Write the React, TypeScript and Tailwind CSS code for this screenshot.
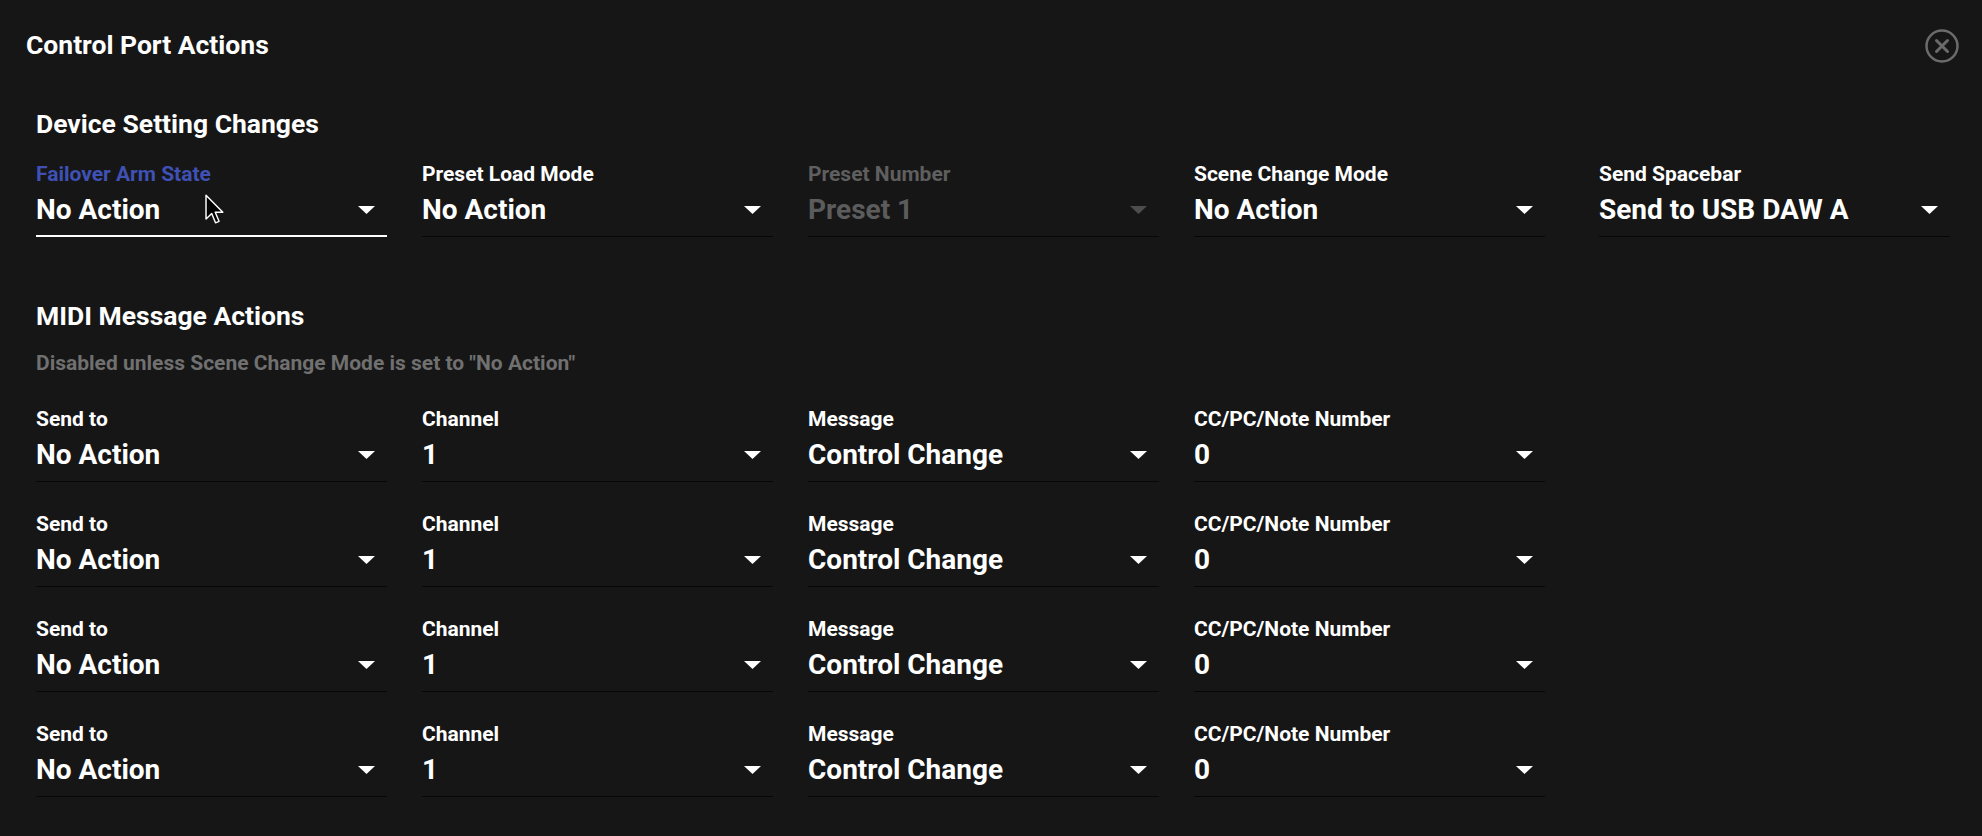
import React from "react";

interface Field {
  label: string;
  value: string;
  focused?: boolean;
  disabled?: boolean;
}

const deviceFields: Field[] = [
  { label: "Failover Arm State", value: "No Action", focused: true },
  { label: "Preset Load Mode", value: "No Action" },
  { label: "Preset Number", value: "Preset 1", disabled: true },
  { label: "Scene Change Mode", value: "No Action" },
];

const midiRow: Field[] = [
  { label: "Send to", value: "No Action" },
  { label: "Channel", value: "1" },
  { label: "Message", value: "Control Change" },
  { label: "CC/PC/Note Number", value: "0" },
];

const DropArrow = ({ color }: { color: string }) => (
  <svg width="17" height="8" viewBox="0 0 17 8" className="shrink-0">
    <polygon points="0,0 17,0 8.5,8" fill={color} />
  </svg>
);

const SelectField = ({ field }: { field: Field }) => {
  const labelColor = field.focused
    ? "text-[#3f51b5]"
    : field.disabled
      ? "text-[#5f5f5f]"
      : "text-white";
  const valueColor = field.disabled ? "text-[#5c5c5c]" : "text-white";
  const underline = field.focused
    ? "border-b-2 border-white pb-[9px]"
    : "border-b border-[#070707] pb-[10px]";

  return (
    <div className="w-[351px] shrink-0">
      <div className={`text-[21px] leading-[24px] font-bold ${labelColor}`}>
        {field.label}
      </div>
      <div className={`mt-2 flex items-center pr-3 ${underline}`}>
        <span className={`flex-1 text-[28px] leading-[32px] font-bold ${valueColor}`}>
          {field.value}
        </span>
        <DropArrow color={field.disabled ? "#4d4d4d" : "#ffffff"} />
      </div>
    </div>
  );
};

export default function App() {
  return (
    <div
      className="relative h-[836px] w-full overflow-hidden bg-[#161616] text-white"
      style={{ fontFamily: "Roboto, 'Liberation Sans', sans-serif" }}
    >
      <div className="flex items-start justify-between pl-[26px] pr-[23px] pt-[29px]">
        <h1 className="text-[26.5px] leading-[32px] font-bold">Control Port Actions</h1>
        <svg width="34" height="34" viewBox="0 0 34 34">
          <circle cx="17" cy="17" r="15.5" fill="none" stroke="#6b6b6b" strokeWidth="2.5" />
          <path d="M11.5 11.5 L22.5 22.5 M22.5 11.5 L11.5 22.5" stroke="#6b6b6b" strokeWidth="3" strokeLinecap="round" />
        </svg>
      </div>

      <div className="pl-9 pr-[33px]">
        <h2 className="mt-[45px] text-[26.5px] leading-[32px] font-bold">Device Setting Changes</h2>
        <div className="mt-[22px] flex">
          <div className="flex gap-[35px]">
            {deviceFields.map((f, i) => (
              <SelectField key={i} field={f} />
            ))}
          </div>
          <div className="ml-[54px]">
            <SelectField field={{ label: "Send Spacebar", value: "Send to USB DAW A" }} />
          </div>
        </div>

        <h2 className="mt-[63px] text-[26.5px] leading-[32px] font-bold">MIDI Message Actions</h2>
        <p className="mt-[19px] text-[21px] leading-[24px] font-bold text-[#707070]">
          Disabled unless Scene Change Mode is set to "No Action"
        </p>
        <div className="mt-8 flex flex-col gap-[30px]">
          {[0, 1, 2, 3].map((row) => (
            <div key={row} className="flex gap-[35px]">
              {midiRow.map((f, i) => (
                <SelectField key={i} field={f} />
              ))}
            </div>
          ))}
        </div>
      </div>

      <svg
        className="absolute left-[205px] top-[194px]"
        width="19"
        height="31"
        viewBox="0 0 13 21"
      >
        <polygon
          points="0.7,0.7 0.7,17 4.6,13.3 7.2,19.6 9.6,18.6 7,12.4 12.2,12.4"
          fill="#000"
          stroke="#fff"
          strokeWidth="1"
          strokeLinejoin="round"
        />
      </svg>
    </div>
  );
}
